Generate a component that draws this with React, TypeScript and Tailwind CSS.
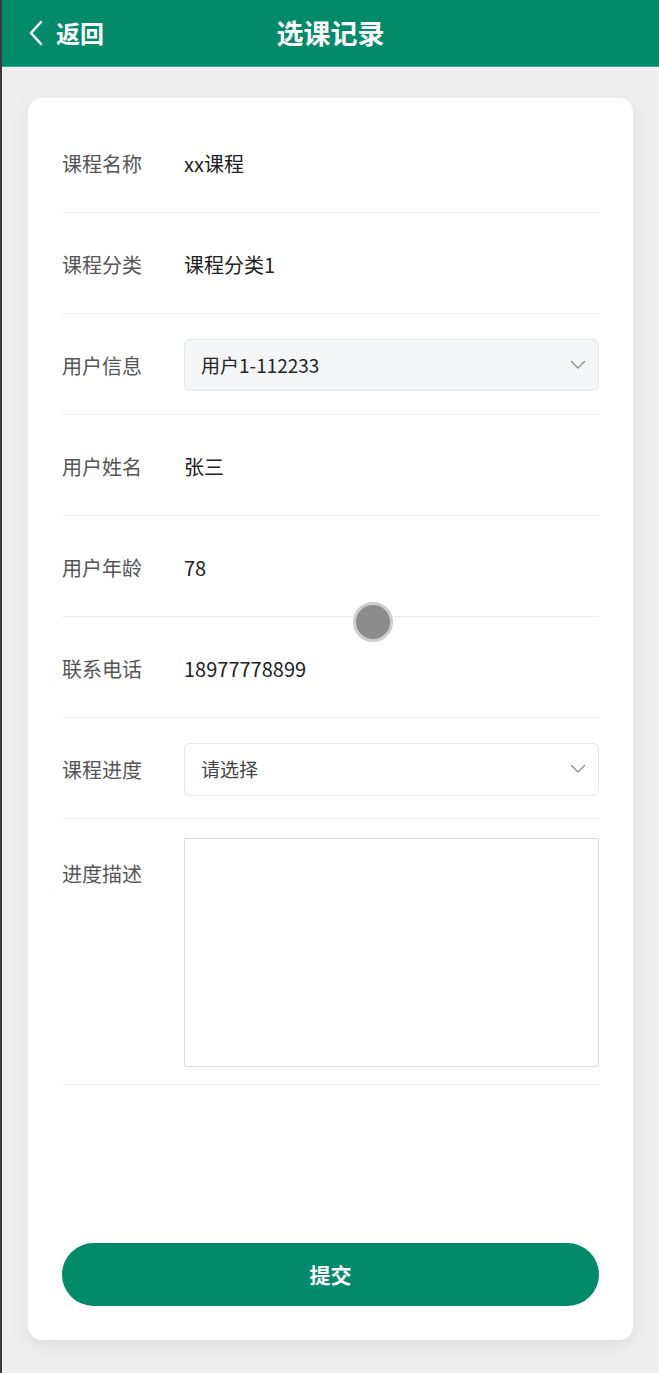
import React from "react";

const font = { fontFamily: '"Noto Sans CJK SC", "Noto Sans", sans-serif' };

function Chevron() {
  return (
    <svg width="16" height="10" viewBox="0 0 16 10" fill="none">
      <path d="M1.5 1.5 L8 8 L14.5 1.5" stroke="#8a8f96" strokeWidth="1.4" strokeLinecap="round" strokeLinejoin="round" />
    </svg>
  );
}

function Row({ label, children }: { label: string; children: React.ReactNode }) {
  return (
    <div className="flex items-center h-[101px] border-b border-[#eeeeee]">
      <div className="w-[122px] shrink-0 text-[20px] text-[#555555] pt-[4px]">{label}</div>
      <div className="flex-1 text-[20px] text-[#222222]">{children}</div>
    </div>
  );
}

export default function App() {
  return (
    <div className="min-h-[1373px] bg-[#efefef] border-l-2 border-[#3a3a3a] relative" style={font}>
      <div className="h-[67px] bg-[#028a69] border-b border-[#3aa88a] relative flex items-center justify-center">
        <div className="absolute left-[25px] top-0 h-full flex items-center gap-[11px] text-white">
          <svg width="18" height="26" viewBox="0 0 18 26" fill="none">
            <path d="M14 2 L4 13 L14 24" stroke="white" strokeWidth="2.6" strokeLinecap="round" strokeLinejoin="round" />
          </svg>
          <span className="text-[24px] font-bold">返回</span>
        </div>
        <span className="text-[27px] font-bold text-white">选课记录</span>
      </div>

      <div className="px-[26px] pt-[31px] pb-[33px]">
        <div className="bg-white rounded-[14px] shadow-[0_6px_18px_rgba(0,0,0,0.08)] px-[34px] pt-[14px] pb-[34px]">
          <Row label="课程名称"><span className="inline-block pt-[4px]">xx课程</span></Row>
          <Row label="课程分类"><span className="inline-block pt-[4px]">课程分类1</span></Row>
          <Row label="用户信息">
            <div className="h-[52px] mt-[2px] rounded-[6px] bg-[#f3f5f7] border border-[#e3e6ea] flex items-center justify-between pl-[16px] pr-[12px]">
              <span className="text-[19px]">用户1-112233</span>
              <Chevron />
            </div>
          </Row>
          <Row label="用户姓名"><span className="inline-block pt-[4px]">张三</span></Row>
          <Row label="用户年龄"><span className="inline-block pt-[4px]">78</span></Row>
          <Row label="联系电话"><span className="inline-block pt-[4px]">18977778899</span></Row>
          <Row label="课程进度">
            <div className="h-[53px] mt-[2px] rounded-[6px] bg-white border border-[#e3e6ea] flex items-center justify-between pl-[16px] pr-[12px]">
              <span className="text-[19px] text-[#444444]">请选择</span>
              <Chevron />
            </div>
          </Row>
          <div className="flex items-start pt-[19px] pb-[17px] border-b border-[#eeeeee]">
            <div className="w-[122px] shrink-0 text-[20px] text-[#555555] pt-[21px]">进度描述</div>
            <div className="flex-1 h-[229px] border border-[#dcdcdc] rounded-[2px] bg-white" />
          </div>
          <div className="h-[158px]" />
          <button className="w-full h-[63px] rounded-full bg-[#028a69] text-white text-[21px] font-bold flex items-center justify-center">
            提交
          </button>
        </div>
      </div>

      <div className="absolute left-[351px] top-[602px] w-[40px] h-[40px] rounded-full bg-[#8c8c8c] border-[3px] border-[#cdcdcd]" />
    </div>
  );
}
